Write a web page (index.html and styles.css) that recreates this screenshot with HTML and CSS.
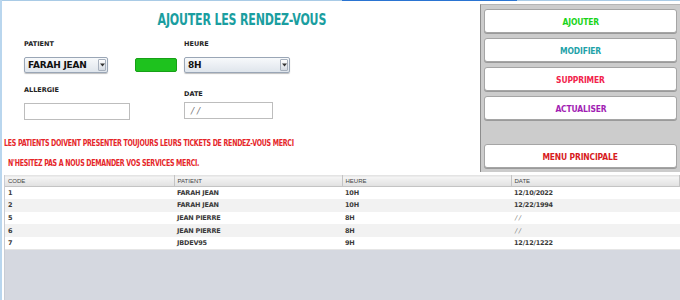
FILE: index.html
```html
<!DOCTYPE html>
<html lang="fr">
<head>
<meta charset="utf-8">
<title>Rendez-vous</title>
<link rel="stylesheet" href="styles.css">
</head>
<body>
<div class="window">
  <div class="top">
    <div class="form">
      <h1 class="title"><span class="squeeze">AJOUTER LES RENDEZ-VOUS</span></h1>
      <div class="fields">
        <div class="col col-left">
          <div class="lbl">PATIENT</div>
          <div class="select sel-patient"><span class="sel-text">FARAH JEAN</span><span class="arrow"><svg width="5" height="4" viewBox="0 0 5 4"><path d="M0 0.5h5L2.5 3.5z" fill="#333"/></svg></span></div>
          <div class="lbl lbl-allergie">ALLERGIE</div>
          <div class="input inp-allergie"></div>
        </div>
        <div class="col col-mid">
          <div class="green"></div>
        </div>
        <div class="col col-right">
          <div class="lbl">HEURE</div>
          <div class="select sel-heure"><span class="sel-text">8H</span><span class="arrow"><svg width="5" height="4" viewBox="0 0 5 4"><path d="M0 0.5h5L2.5 3.5z" fill="#333"/></svg></span></div>
          <div class="lbl lbl-date">DATE</div>
          <div class="input inp-date"><span class="date-ph">/ /</span></div>
        </div>
      </div>
      <p class="msg msg1"><span class="squeeze-left">LES PATIENTS DOIVENT PRESENTER TOUJOURS LEURS TICKETS DE RENDEZ-VOUS MERCI</span></p>
      <p class="msg msg2"><span class="squeeze-left">N'HESITEZ PAS A NOUS DEMANDER VOS SERVICES MERCI.</span></p>
    </div>
    <div class="panel">
      <div class="btn btn-green"><span class="squeeze">AJOUTER</span></div>
      <div class="btn btn-teal"><span class="squeeze">MODIFIER</span></div>
      <div class="btn btn-red"><span class="squeeze">SUPPRIMER</span></div>
      <div class="btn btn-purple"><span class="squeeze">ACTUALISER</span></div>
      <div class="btn btn-menu"><span class="squeeze">MENU PRINCIPALE</span></div>
    </div>
  </div>
  <div class="table-wrap">
    <table class="grid">
      <thead>
        <tr><th class="c1">CODE</th><th class="c2">PATIENT</th><th class="c3">HEURE</th><th class="c4">DATE</th></tr>
      </thead>
      <tbody>
        <tr><td>1</td><td>FARAH JEAN</td><td>10H</td><td>12/10/2022</td></tr>
        <tr><td>2</td><td>FARAH JEAN</td><td>10H</td><td>12/22/1994</td></tr>
        <tr><td>5</td><td>JEAN PIERRE</td><td>8H</td><td class="slash">/ /</td></tr>
        <tr><td>6</td><td>JEAN PIERRE</td><td>8H</td><td class="slash">/ /</td></tr>
        <tr><td>7</td><td>JBDEV95</td><td>9H</td><td>12/12/1222</td></tr>
      </tbody>
    </table>
  </div>
</div>
</body>
</html>
```

FILE: styles.css
```css
* { box-sizing: border-box; }
html, body { margin: 0; padding: 0; background: #ffffff; }
body { width: 680px; height: 300px; overflow: hidden; font-family: "DejaVu Sans", sans-serif; }

.window {
  height: 300px;
  border-left: 2px solid #b9d6ee;
  display: flex;
  flex-direction: column;
  background: linear-gradient(90deg, #a9cbe6 0, #a9cbe6 340px, #2a74d2 340px, #2a74d2 515px, #a9cbe6 515px) top left / 100% 1px no-repeat, #ffffff;
  padding-top: 1px;
}

.top { display: flex; height: 171px; }

.form { width: 478px; padding-top: 9px; }

.squeeze { display: inline-block; transform: scaleX(0.67); transform-origin: center; white-space: nowrap; }
.squeeze-left { display: inline-block; transform: scaleX(0.70); transform-origin: left center; white-space: nowrap; }

.title {
  margin: 0;
  height: 20px;
  font-size: 16.5px;
  line-height: 20px;
  font-weight: bold;
  color: #1a9ea0;
  text-align: center;
  letter-spacing: -0.3px;
  padding-left: 2px;
  white-space: nowrap;
}

.fields { display: flex; padding-left: 22px; margin-top: 10px; height: 90px; }
.col { display: flex; flex-direction: column; }
.col-left { width: 111px; }
.col-mid { width: 49px; }
.col-right { width: 110px; }

.lbl {
  height: 8px;
  font-size: 6.5px;
  line-height: 8px;
  font-weight: bold;
  color: #222;
}
.lbl-allergie { margin-top: 13px; }
.lbl-date { margin-top: 17px; }

.select {
  margin-top: 9px;
  height: 16px;
  display: flex;
  align-items: center;
  justify-content: space-between;
  border: 1px solid #9aa6b6;
  border-radius: 2px;
  background: linear-gradient(#f7f9fb, #dfe5ec);
  box-shadow: 0 1px 1px rgba(0,0,0,0.25);
  padding-left: 3px;
  padding-right: 1px;
}
.sel-patient { width: 84px; }
.sel-heure { width: 106px; }
.sel-text { font-size: 9px; font-weight: bold; color: #111; letter-spacing: -0.2px; }
.arrow {
  width: 8px; height: 12px;
  display: flex; align-items: center; justify-content: center;
  border: 1px solid #a7b0bd;
  border-radius: 1px;
  background: linear-gradient(#ffffff, #d4dae2);
}

.input {
  height: 17px;
  border: 1px solid #bdbdbd;
  background: #fff;
  display: flex;
  align-items: center;
}
.inp-allergie { width: 106px; margin-top: 9px; }
.inp-date { width: 89px; margin-top: 4px; padding-left: 6px; }
.date-ph { font-size: 9px; color: #777; font-style: italic; }

.green {
  margin-top: 18px;
  width: 42px;
  height: 14px;
  background: #1ec21e;
  border: 1px solid #17a017;
  border-radius: 2px;
}

.msg {
  margin: 0;
  font-size: 9px;
  line-height: 10px;
  font-weight: bold;
  color: #e5262a;
  letter-spacing: -0.4px;
  white-space: nowrap;
}
.msg1 { margin-top: 8px; padding-left: 2px; }
.msg2 { margin-top: 10px; padding-left: 6px; }

.panel {
  width: 200px;
  margin-top: 3px;
  height: 168px;
  background: #cccccc;
  border-left: 1px solid #8d8d8d;
  border-top: 1px solid #b5b5b5;
  padding: 4px 3px 0 3px;
  display: flex;
  flex-direction: column;
  gap: 5px;
}
.btn {
  height: 24px;
  background: #ffffff;
  border: 1px solid #a5a5a5;
  border-radius: 3px;
  box-shadow: 0 1px 0 #9a9a9a;
  display: flex;
  align-items: center;
  justify-content: center;
  font-size: 9.5px;
  font-weight: bold;
  letter-spacing: -0.2px;
}
.btn .squeeze { transform: scaleX(0.8); }
.btn-green { color: #19d419; }
.btn-teal { color: #1ea2a8; }
.btn-red { color: #f2234b; }
.btn-purple { color: #a21eb3; }
.btn-menu { color: #d71a22; margin-top: 19px; }

.table-wrap {
  margin-top: 3px;
  margin-left: 2px;
  flex: 1;
  background: #d5d8e0;
  border-left: 1px solid #c8ccd4;
}
.grid {
  width: 100%;
  border-collapse: collapse;
  table-layout: fixed;
}
.grid th {
  height: 11px;
  padding: 0 0 0 3px;
  text-align: left;
  font-family: "Liberation Sans", Arial, sans-serif;
  font-weight: normal;
  font-size: 6px;
  color: #444;
  background: linear-gradient(#f6f6f6, #e0e0e0);
  border-right: 1px solid #c4c4c4;
  border-bottom: 1px solid #c4c4c4;
  border-top: 1px solid #e4e4e4;
}
.c1 { width: 169px; }
.c2 { width: 168px; }
.c3 { width: 169px; }
.grid td {
  height: 12.6px;
  padding: 0 0 0 3px;
  font-size: 6.5px;
  font-weight: bold;
  color: #3a3a3a;
  letter-spacing: -0.2px;
  background: #ffffff;
}
.grid tbody tr:nth-child(even) td { background: #f2f2f2; }
.grid tbody tr:last-child td { border-bottom: 1px solid #e6e6e6; }
.grid td.slash { color: #777; font-style: italic; font-weight: normal; padding-left: 4px; }
```
